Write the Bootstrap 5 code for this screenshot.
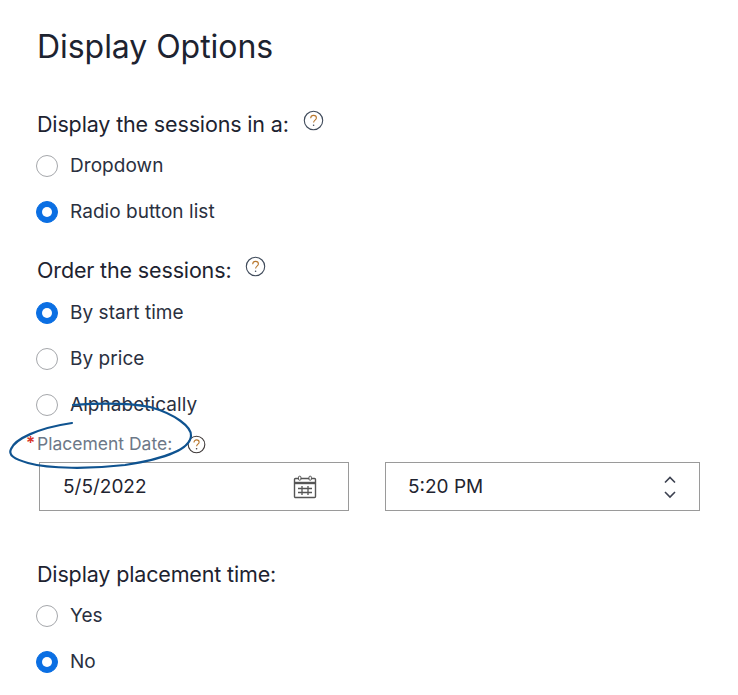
<!doctype html>
<html lang="en"><head><meta charset="utf-8"><title>Display Options</title>
<link href="https://cdn.jsdelivr.net/npm/bootstrap@5.3.0/dist/css/bootstrap.min.css" rel="stylesheet">
<style>
html,body{height:695px;overflow:hidden}
body{font-family:Inter,"Noto Sans",sans-serif;color:#1d2330;background:#fff;position:relative}
.page-wrap{padding:26px 38px 0 36px;width:738px}
.page-title{font-size:32px;font-weight:400;line-height:42px;margin:0 0 42px 1px;letter-spacing:-.05px}
.group-label{font-size:21.5px;line-height:28px;margin:0 0 0 1px;letter-spacing:-.15px;display:flex;align-items:flex-start}
.help-ico{margin-left:14px;margin-top:0;width:21px;height:21px;flex:none}
.opt{display:flex;align-items:center;height:46px;font-size:19px;letter-spacing:.05px}
.opt .form-check-input{width:22px;height:22px;margin:0 12px 0 0;flex:none;border-color:#a5a7ab;float:none}
.opt .form-check-input:checked{background-color:#0b6fe3;border-color:#0b6fe3}
.opt label{color:#2a3040}
.sess-a{margin-top:5px}
.sess-b{margin-top:6px}
.sec-two{margin-top:21px}
.sec-date{margin-top:12px}
.sec-last{margin-top:49px}
.date-row{display:flex;gap:36px;margin-left:3px;width:661px}
.date-label{font-size:17.5px;line-height:22px;color:#6d7888;display:flex;align-items:center;margin-top:-7px;margin-bottom:7px;margin-left:1px}
.date-label .req{color:#d9352b;width:11px;margin-top:-2px;margin-left:-11px;font-size:17px;font-weight:600}
.date-label .help-ico{margin-left:15px;margin-top:1px;width:19px;height:19px}
.fld{border:1px solid #9a9a9a;height:49px;display:flex;align-items:center;justify-content:space-between;font-size:19px;color:#1f2430}
.fld-date{width:310px;padding:1px 31px 0 23px}
.fld-time{width:315px;padding:1px 22px 0 22px}
.ink{position:absolute;left:0;top:395px;pointer-events:none}
</style></head><body>
<main class="page-wrap">
<h1 class="page-title">Display Options</h1>
<section>
<div class="group-label">Display the sessions in a:<svg class="help-ico" viewBox="0 0 21 21"><circle cx="10.5" cy="10.5" r="9.2" fill="none" stroke="#3f4a5a" stroke-width="1.1"/><path d="M7.7 8.2c0-1.8 1.3-2.8 2.9-2.8s2.8 1 2.8 2.5c0 2.2-2.8 2.3-2.8 4.6" fill="none" stroke="#b8772d" stroke-width="1.1"/><circle cx="10.6" cy="15.2" r=".8" fill="#3f4a5a"/></svg></div>
<div class="opt sess-a"><input class="form-check-input" type="radio" name="a" id="a1"><label for="a1">Dropdown</label></div>
<div class="opt"><input class="form-check-input" type="radio" name="a" id="a2" checked><label for="a2">Radio button list</label></div>
</section>
<section class="sec-two">
<div class="group-label">Order the sessions:<svg class="help-ico" viewBox="0 0 21 21"><circle cx="10.5" cy="10.5" r="9.2" fill="none" stroke="#3f4a5a" stroke-width="1.1"/><path d="M7.7 8.2c0-1.8 1.3-2.8 2.9-2.8s2.8 1 2.8 2.5c0 2.2-2.8 2.3-2.8 4.6" fill="none" stroke="#b8772d" stroke-width="1.1"/><circle cx="10.6" cy="15.2" r=".8" fill="#3f4a5a"/></svg></div>
<div class="opt sess-b"><input class="form-check-input" type="radio" name="b" id="b1" checked><label for="b1">By start time</label></div>
<div class="opt"><input class="form-check-input" type="radio" name="b" id="b2"><label for="b2">By price</label></div>
<div class="opt"><input class="form-check-input" type="radio" name="b" id="b3"><label for="b3">Alphabetically</label></div>
</section>
<section class="sec-date">
<div class="date-label"><span class="req">*</span>Placement Date:<svg class="help-ico" viewBox="0 0 21 21"><circle cx="10.5" cy="10.5" r="9.2" fill="none" stroke="#3f3a3a" stroke-width="1.2"/><path d="M7.7 8.2c0-1.8 1.3-2.8 2.9-2.8s2.8 1 2.8 2.5c0 2.2-2.8 2.3-2.8 4.6" fill="none" stroke="#b8772d" stroke-width="1.2"/><circle cx="10.6" cy="15.2" r=".9" fill="#3f3a3a"/></svg></div>
<div class="date-row">
<div class="fld fld-date"><span>5/5/2022</span><svg width="24" height="24" viewBox="0 0 24 24"><rect x="1.5" y="3.5" width="21" height="19" rx="1" fill="none" stroke="#555" stroke-width="1.4"/><path d="M1.5 8h21" stroke="#555" stroke-width="2.4"/><path d="M9 11v9M15 11v9M5 13.5h14M5 17.5h14" stroke="#555" stroke-width="1.3"/><rect x="5.5" y="1.2" width="2.4" height="4" rx="1" fill="#fff" stroke="#555"/><rect x="16" y="1.2" width="2.4" height="4" rx="1" fill="#fff" stroke="#555"/></svg></div>
<div class="fld fld-time"><span>5:20 PM</span><svg width="14" height="26" viewBox="0 0 14 26"><path d="M2 8.5 7 3.5l5 5M2 18l5 5 5-5" fill="none" stroke="#3c4150" stroke-width="1.6"/></svg></div>
</div>
</section>
<section class="sec-last">
<div class="group-label">Display placement time:</div>
<div class="opt sess-a"><input class="form-check-input" type="radio" name="c" id="c1"><label for="c1">Yes</label></div>
<div class="opt"><input class="form-check-input" type="radio" name="c" id="c2" checked><label for="c2">No</label></div>
</section>
</main>
<svg class="ink" width="220" height="90" viewBox="0 0 220 90"><path d="M73 10C100 8 130 8 150 12C175 19 192 32 191 41C190 54 165 64 125 70C90 74 50 74 28 68C14 64 8 60 11 54C15 44 38 33 72 28" fill="none" stroke="#0f5390" stroke-width="2.2" stroke-linecap="round"/></svg>
</body></html>
